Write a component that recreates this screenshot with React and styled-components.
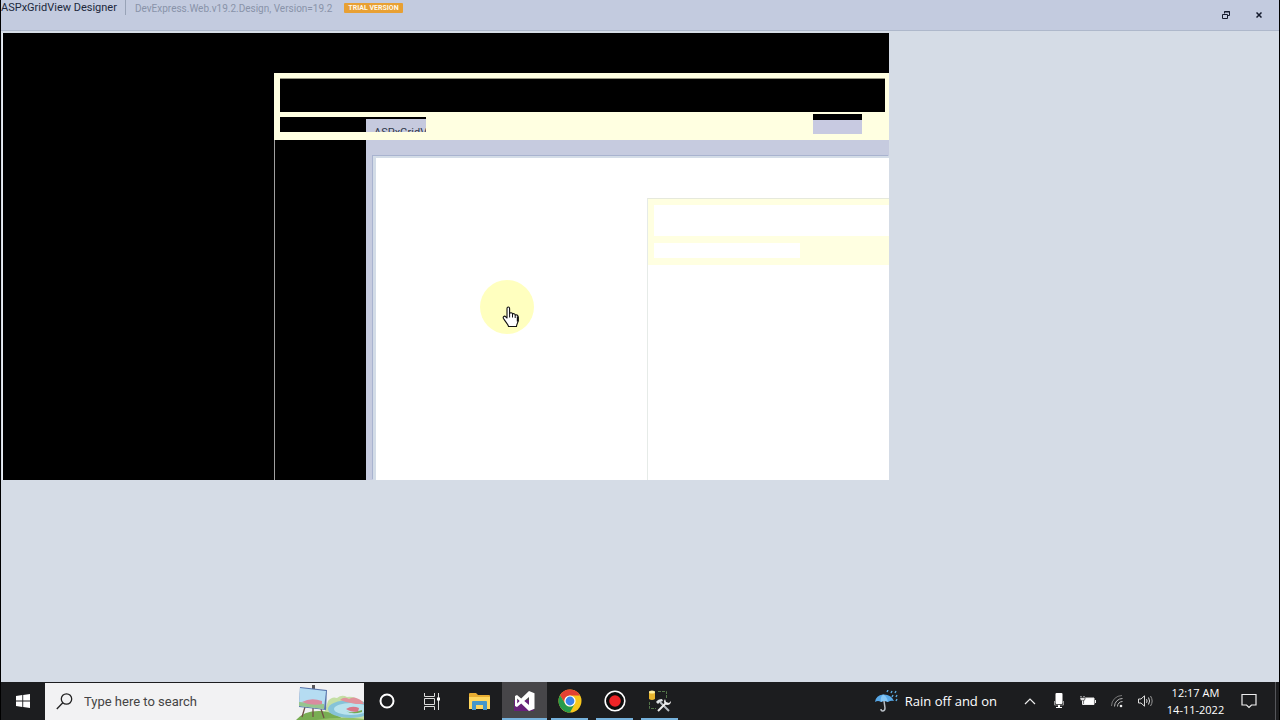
import React, { useState } from "react";
import styled, { createGlobalStyle } from "styled-components";

const App = () => {
  const [keyword, setKeyword] = useState("");

  return (
    <Screen>
      <GlobalStyle />
      <TitleBar>
        <Title>ASPxGridView Designer</Title>
        <Version>DevExpress.Web.v19.2.Design, Version=19.2</Version>
        <TrialBadge>TRIAL VERSION</TrialBadge>
        <WindowButtons>
          <WindowBtn aria-label="Restore">
            <RestoreIcon />
          </WindowBtn>
          <WindowBtn aria-label="Close">
            <CloseIcon />
          </WindowBtn>
        </WindowButtons>
      </TitleBar>

      <Workspace>
        <Surface>
          <Panel>
            <PanelHeader>
              <PanelBar />
              <PanelTools>
                <TabStrip>
                  <Tab>ASPxGridView Designer</Tab>
                </TabStrip>
                <Chip />
              </PanelTools>
            </PanelHeader>
            <PanelBody>
              <InnerFrame>
                <InnerContent>
                  <GhostPanel>
                    <GhostHeader>
                      <GhostBar />
                      <GhostTab />
                    </GhostHeader>
                  </GhostPanel>
                </InnerContent>
              </InnerFrame>
            </PanelBody>
          </Panel>
          <Pointer>
            <HandIcon />
          </Pointer>
        </Surface>
      </Workspace>

      <TaskBar>
        <StartBtn aria-label="Start">
          <StartIcon />
        </StartBtn>
        <SearchBox>
          <SearchIcon />
          <SearchInput
            type="text"
            placeholder="Type here to search"
            value={keyword}
            onChange={(e) => setKeyword(e.target.value)}
          />
          <SearchArt />
        </SearchBox>
        {TASK_DATA.map((task) => {
          const Icon = task.icon;
          return (
            <TaskBtn
              key={task.id}
              aria-label={task.name}
              $active={task.active}
              $running={task.running}
            >
              <Icon />
            </TaskBtn>
          );
        })}
        <Tray>
          <WeatherBtn>
            <UmbrellaIcon />
            Rain off and on
          </WeatherBtn>
          {TRAY_DATA.map((item) => {
            const Icon = item.icon;
            return (
              <TrayBtn key={item.id} aria-label={item.name}>
                <Icon />
              </TrayBtn>
            );
          })}
          <ClockBtn>
            <span>12:17 AM</span>
            <span>14-11-2022</span>
          </ClockBtn>
          <NoticeBtn aria-label="Notifications">
            <NoticeIcon />
          </NoticeBtn>
        </Tray>
      </TaskBar>
    </Screen>
  );
};

export default App;

const RestoreIcon = () => (
  <svg width="8" height="8" viewBox="0 0 8 8" fill="none" stroke="#141a2c">
    <path d="M2.5 2.5V.5H7.5V4.5H5.5" />
    <path d="M2 1H8" />
    <path d="M.5 3.5H5.5V7.5H.5Z" />
  </svg>
);

const CloseIcon = () => (
  <svg width="6" height="6" viewBox="0 0 6 6" stroke="#141a2c" strokeWidth="1.5">
    <path d="M.5 .5L5.5 5.5M5.5 .5L.5 5.5" />
  </svg>
);

const HandIcon = () => (
  <svg width="18" height="22" viewBox="0 0 18 22" strokeLinejoin="round">
    <path
      d="M5 12V2.5C5 .5 7.6 .5 7.6 2.5V7.5C8.4 6.2 10.3 6.6 10.5 8C11.5 7.2 13 7.7 13.2 9C14.5 8.5 16 9.2 16 10.5V15C16 17 14.5 18 14.5 20.5H6.5C6.5 18.5 3.5 16 1.5 12.5C.5 10.5 2.5 9.5 3.8 10.8Z"
      fill="#fff"
      stroke="#111"
      strokeWidth="1.1"
    />
    <path d="M7.6 7.5V11.5M10.5 8V11.5M13.2 9V12" stroke="#111" fill="none" />
    <path d="M15.8 10.5V15.5" stroke="#111" strokeWidth="2" />
  </svg>
);

const StartIcon = () => (
  <svg width="15" height="14" viewBox="1 0 15 14" fill="#fff">
    <path d="M1 2L7.3 1.1V6.6H1ZM8.2 1L15 0V6.6H8.2ZM1 7.4H7.3V12.9L1 12ZM8.2 7.4H15V14L8.2 13Z" />
  </svg>
);

const SearchIcon = () => (
  <svg width="17" height="17" viewBox="0 0 17 17" fill="none" stroke="#222" strokeWidth="1.3">
    <circle cx="10.5" cy="6" r="5.2" />
    <path d="M6.8 9.8L.8 16" />
  </svg>
);

const SearchArt = () => (
  <svg width="68" height="36" viewBox="0 0 68 36" aria-hidden="true">
    <path d="M32 17Q36 12 41 14Q46 10 51 13Q58 12 62 16L68 18V36H26Z" fill="#c5dfa4" />
    <path d="M0 36Q8 26 26 27Q40 29 48 36Z" fill="#79ad52" />
    <ellipse cx="54" cy="25" rx="22" ry="9" fill="#86c3d8" />
    <ellipse cx="55" cy="25" rx="17" ry="6" fill="#b9e3ee" />
    <path d="M44 16Q48 12 53 15Q58 11 66 17L68 20L60 20L50 18Z" fill="#e0939c" />
    <path d="M50 25Q56 21 63 24L62 28Q54 28 50 25Z" fill="#d97788" />
    <path d="M50 27Q56 30 66 26V28Q56 31 50 27Z" fill="#75a950" />
    <path d="M20 36Q44 32 68 35V36Z" fill="#94c268" />
    <path d="M9 23L6 33M25 25L28 34M17 24V33" stroke="#705044" strokeWidth="1.3" />
    <path d="M16 1H19V5H16Z" fill="#59565a" />
    <path d="M4 3L31 6L30 26L3 23Z" fill="#5874ab" />
    <path d="M4 4L30 7L28 25L3 22Z" fill="#b5dcf2" />
    <path d="M3 18L28 20V25L3 22Z" fill="#96c58f" />
    <path d="M6 18Q15 13 26 17V20Q15 22 6 18Z" fill="#d98ba0" />
  </svg>
);

const CortanaIcon = () => (
  <svg width="16" height="16" viewBox="0 0 16 16" fill="none" stroke="#fff" strokeWidth="2">
    <circle cx="8" cy="8" r="6.5" />
  </svg>
);

const TaskViewIcon = () => (
  <svg width="18" height="17" viewBox="1 0 18 17" fill="none" stroke="#ddd">
    <path d="M1.5 0V3.5H11.5V0M1.5 17V13.5H11.5V17M1.5 5.5H11.5V11.5H1.5ZM15.5 0V17" />
    <path d="M14 4.5H17V7.5H14Z" fill="#fff" stroke="none" />
  </svg>
);

const FolderIcon = () => (
  <svg width="21" height="17" viewBox="0 0 21 17">
    <path d="M0 1Q0 0 1 0H7L9 2H20Q21 2 21 3V16H0Z" fill="#e9ae32" />
    <path d="M0 4H21V16H0Z" fill="#ffd75e" />
    <path d="M3 9Q3 8 4 8H17Q18 8 18 9V17H14V12H7V17H3Z" fill="#4597c9" />
  </svg>
);

const StudioIcon = () => (
  <svg width="22" height="22" viewBox="0 0 22 22">
    <path d="M0 10H15L20 21H0Z" fill="#68217a" />
    <path
      d="M15 1L20.5 3.3V18.7L15 21L7.2 13.5L3 17L1 16V6L3 5L7.2 8.5ZM15 7L10.3 11L15 15ZM3.2 8.5V13.5L5.6 11Z"
      fill="#fff"
      fillRule="evenodd"
    />
  </svg>
);

const ChromeIcon = () => (
  <svg width="24" height="24" viewBox="0 0 24 24">
    <circle cx="12" cy="12" r="11.5" fill="#f8c71d" />
    <path d="M2 6.3A11.5 11.5 0 0 1 22 6.5H12A5.5 5.5 0 0 0 7.2 14.7Z" fill="#e34133" />
    <path d="M2 6.3L7.2 14.7A5.5 5.5 0 0 0 16.8 14.7L12 23.5A11.5 11.5 0 0 1 2 6.3Z" fill="#279b4b" />
    <circle cx="12" cy="12" r="5.6" fill="#fff" />
    <circle cx="12" cy="12" r="4.4" fill="#3c83ea" />
  </svg>
);

const RecordIcon = () => (
  <svg width="22" height="22" viewBox="0 0 22 22">
    <circle cx="11" cy="11" r="9.8" fill="#0d0d0d" stroke="#fff" strokeWidth="1.6" />
    <circle cx="11" cy="11" r="5.8" fill="#ee2427" />
  </svg>
);

const DataToolsIcon = () => (
  <svg width="24" height="24" viewBox="0 0 24 24" fill="none">
    <path d="M10 2.5H18.5V9M1.5 13V19.5H8" stroke="#55764b" strokeDasharray="3 1" />
    <path d="M1 3V10Q4 12 7 10V3Z" fill="#e7b52d" />
    <ellipse cx="4" cy="3" rx="3" ry="1.5" fill="#fff0a0" />
    <path d="M12 13L21 22" stroke="#b8bdc2" strokeWidth="2" />
    <path d="M8 13Q10 10 14 10L15 12L12 13L10 15Z" fill="#dfe3e6" />
    <path d="M18 14L10 22" stroke="#eee" strokeWidth="2" />
    <path d="M17 10L18 13L21 14L23 12Q23 16 19 16Q16 15 16 12Z" fill="#eee" />
  </svg>
);

const UmbrellaIcon = () => (
  <svg width="23" height="22" viewBox="0 0 23 22" fill="none">
    <path d="M0 12Q1 5 8 4.5Q16 4 19 11Q16 10 13 12Q9 10 6 12Q3 10 0 12Z" fill="#58a9e8" />
    <path d="M8 4.5Q5 7 6 12Q9 10 13 12Q12 6 8 4.5Z" fill="#86c7f5" />
    <path d="M9 11L10 18Q10 21 7.5 21Q6 21 6 19" stroke="#b8bec4" strokeWidth="1.5" />
    <path d="M12 2L13 0M16 3L17 1M20 3L21 1M17 7L18 5M21 7L22 5M21 11L22 9" stroke="#5ba9df" strokeWidth="1.4" />
  </svg>
);

const ChevronIcon = () => (
  <svg width="12" height="7" viewBox="0 0 12 7" fill="none" stroke="#eee" strokeWidth="1.2">
    <path d="M1 6L6 1L11 6" />
  </svg>
);

const MicIcon = () => (
  <svg width="10" height="16" viewBox="0 0 10 16" fill="#fff">
    <rect x="1.5" y="0" width="7" height="11" rx="1" />
    <path d="M.5 8V12H9.5V8" fill="none" stroke="#999" />
    <path d="M4 12H6V14H8V15H2V14H4Z" />
  </svg>
);

const BatteryIcon = () => (
  <svg width="16" height="12" viewBox="0 0 16 12" fill="none" stroke="#eee">
    <path d="M4 3H14V9.5H4Z" fill="#fff" />
    <path d="M15.5 5V8" />
    <path d="M1 1V3M4 1V3" />
    <path d="M0 2.5H5V4Q4.5 6 2.5 6Q.5 6 0 4Z" fill="#ddd" stroke="#1c1d1f" strokeWidth=".6" />
    <path d="M2.5 6V9.5H5" />
  </svg>
);

const WifiIcon = () => (
  <svg width="14" height="14" viewBox="0 0 14 14" fill="none">
    <path d="M1.5 12A10.5 10.5 0 0 1 12 1.5" stroke="#777" />
    <path d="M4.5 12.5A8 8 0 0 1 12.5 4.5M7.5 12.5A5 5 0 0 1 12.5 7.5" stroke="#bbb" />
    <circle cx="11" cy="12" r="1.3" fill="#eee" />
  </svg>
);

const VolumeIcon = () => (
  <svg width="15" height="12" viewBox="0 0 15 12" fill="none" stroke="#ddd">
    <path d="M.5 4H3L6.5 .8V11.2L3 8H.5Z" />
    <path d="M8.5 4.2Q9.7 6 8.5 7.8M10.5 2.5Q12.7 6 10.5 9.5" />
    <path d="M12.5 1Q15.8 6 12.5 11" stroke="#999" />
  </svg>
);

const NoticeIcon = () => (
  <svg width="16" height="16" viewBox="0 0 16 16" fill="none" stroke="#eee" strokeWidth="1.2">
    <path d="M1 1.5H15V12H10.5L8 14.5L5.5 12H1Z" />
  </svg>
);

const TASK_DATA = [
  { id: 1, name: "Cortana", icon: CortanaIcon },
  { id: 2, name: "Task View", icon: TaskViewIcon },
  { id: 3, name: "File Explorer", icon: FolderIcon },
  { id: 4, name: "Visual Studio", icon: StudioIcon, active: true, running: true },
  { id: 5, name: "Chrome", icon: ChromeIcon, running: true },
  { id: 6, name: "Recorder", icon: RecordIcon, running: true },
  { id: 7, name: "Data Tools", icon: DataToolsIcon, running: true },
];

const TRAY_DATA = [
  { id: 1, name: "Show hidden icons", icon: ChevronIcon },
  { id: 2, name: "Microphone", icon: MicIcon },
  { id: 3, name: "Battery", icon: BatteryIcon },
  { id: 4, name: "Network", icon: WifiIcon },
  { id: 5, name: "Volume", icon: VolumeIcon },
];

const GlobalStyle = createGlobalStyle`
  * {
    box-sizing: border-box;
  }
  body {
    margin: 0;
    font-family: "Open Sans", "Noto Sans", sans-serif;
  }
  button {
    padding: 0;
    border: none;
    background: none;
    color: inherit;
    font-family: inherit;
    cursor: pointer;
  }
  svg {
    display: block;
    flex: none;
  }
`;

const Screen = styled.div`
  display: flex;
  flex-direction: column;
  min-height: 100vh;
  border: solid #000;
  border-width: 0 1px;
  background-color: #d5dce6;
`;

const TitleBar = styled.header`
  display: flex;
  align-items: flex-start;
  height: 31px;
  border-bottom: 1px solid #aeb8cb;
  background-color: #c3cbdf;
  font-family: Roboto, sans-serif;
`;

const Title = styled.h1`
  margin: 0;
  padding-right: 8px;
  border-right: 1px solid #98a3b7;
  font-size: 11px;
  font-weight: 400;
  line-height: 15px;
  color: #20283c;
`;

const Version = styled.span`
  padding: 0 12px 0 9px;
  font-size: 10px;
  line-height: 17px;
  color: #8993a9;
`;

const TrialBadge = styled.span`
  margin-top: 3px;
  padding: 0 4px;
  border-radius: 1px;
  background-color: #e8a033;
  font-size: 7px;
  font-weight: 700;
  line-height: 10px;
  color: #fff8e8;
`;

const WindowButtons = styled.div`
  display: flex;
  margin-left: auto;
  padding-right: 4px;
`;

const WindowBtn = styled.button`
  display: flex;
  align-items: center;
  justify-content: center;
  width: 33px;
  height: 30px;
`;

const Workspace = styled.main`
  display: grid;
  grid-template-columns: 888fr 390fr;
  flex: 1;
  align-items: start;
  padding-top: 2px;
`;

const Surface = styled.section`
  position: relative;
  margin-left: 1px;
  padding: 40px 0 0 271px;
  border-left: 1px solid #e8edf4;
  background-color: #000;
`;

const Panel = styled.div`
  border-left: 1px solid #a0a0a0;
`;

const PanelHeader = styled.div`
  margin-left: -1px;
  padding: 5px 4px 6px 6px;
  background-color: #ffffe1;
`;

const PanelBar = styled.div`
  height: 34px;
  border-top: 1px solid #999985;
  background-color: #000;
`;

const PanelTools = styled.div`
  display: flex;
  align-items: flex-start;
  justify-content: space-between;
  height: 22px;
  padding: 2px 23px 0 0;
`;

const TabStrip = styled.div`
  width: 146px;
  height: 15px;
  margin-top: 3px;
  padding: 2px 0 0 86px;
  background-color: #000;
`;

const Tab = styled.div`
  height: 13px;
  padding: 6px 0 0 8px;
  overflow: hidden;
  background-color: #c6cade;
  font-family: Roboto, sans-serif;
  font-size: 11px;
  line-height: 15px;
  white-space: nowrap;
  color: #303849;
`;

const Chip = styled.div`
  width: 49px;
  height: 20px;
  border-top: 6px solid #000;
  background-color: #c8cae1;
`;

const PanelBody = styled.div`
  padding-left: 91px;
`;

const InnerFrame = styled.div`
  padding: 16px 0 0 7px;
  background-color: #c6cbdf;
`;

const InnerContent = styled.div`
  height: 324px;
  padding: 40px 0 0 271px;
  border-top: 2px solid #d3dce7;
  border-left: 3px solid #d3dce7;
  box-shadow: -1px -1px #a9b3cf;
  background-color: #fff;
`;

const GhostPanel = styled.div`
  height: 100%;
  border-top: 1px solid #e6e9dc;
  border-left: 1px solid #e6ebe8;
`;

const GhostHeader = styled.div`
  padding: 6px 0 7px 6px;
  background-color: #ffffe1;
`;

const GhostBar = styled.div`
  height: 31px;
  background-color: #fff;
`;

const GhostTab = styled.div`
  width: 146px;
  height: 15px;
  margin-top: 7px;
  background-color: #fff;
`;

const Pointer = styled.div`
  position: absolute;
  top: 247px;
  left: 477px;
  width: 54px;
  height: 54px;
  padding: 26px 0 0 22px;
  border-radius: 50%;
  background-color: #ffffbf;
`;

const TaskBar = styled.footer`
  display: flex;
  height: 38px;
  background-color: #1c1d1f;
  color: #fff;
`;

const StartBtn = styled.button`
  display: flex;
  align-items: center;
  justify-content: center;
  width: 44px;
`;

const TaskBtn = styled.button`
  position: relative;
  display: flex;
  align-items: center;
  justify-content: center;
  width: ${(props) => (props.$running ? "45px" : "46px")};
  background-color: ${(props) => (props.$active ? "#474649" : "transparent")};
  &::after {
    content: "";
    display: ${(props) => (props.$running ? "block" : "none")};
    position: absolute;
    bottom: 0;
    left: ${(props) => (props.$active ? "0" : "4px")};
    right: ${(props) => (props.$active ? "0" : "4px")};
    height: 2px;
    background-color: #76b2dc;
  }
`;

const SearchBox = styled.label`
  display: flex;
  align-items: center;
  width: 319px;
  margin-top: 1px;
  padding-left: 11px;
  background-color: #f2f2f3;
`;

const SearchInput = styled.input`
  flex: 1;
  min-width: 0;
  padding: 0 0 0 11px;
  border: none;
  outline: none;
  background: none;
  font-family: Roboto, sans-serif;
  font-size: 13px;
  &::placeholder {
    color: #444;
    opacity: 1;
  }
`;

const Tray = styled.div`
  display: flex;
  margin-left: auto;
  padding-right: 3px;
`;

const WeatherBtn = styled.button`
  display: flex;
  align-items: center;
  gap: 7px;
  padding-right: 18px;
  font-size: 13px;
`;

const TrayBtn = styled.button`
  display: flex;
  align-items: center;
  justify-content: center;
  width: 29px;
`;

const ClockBtn = styled.button`
  display: flex;
  flex-direction: column;
  align-items: center;
  justify-content: center;
  width: 71px;
  font-size: 11px;
  line-height: 17px;
`;

const NoticeBtn = styled.button`
  display: flex;
  align-items: center;
  justify-content: center;
  width: 45px;
  padding-right: 8px;
  border-right: 1px solid #55565a;
`;
